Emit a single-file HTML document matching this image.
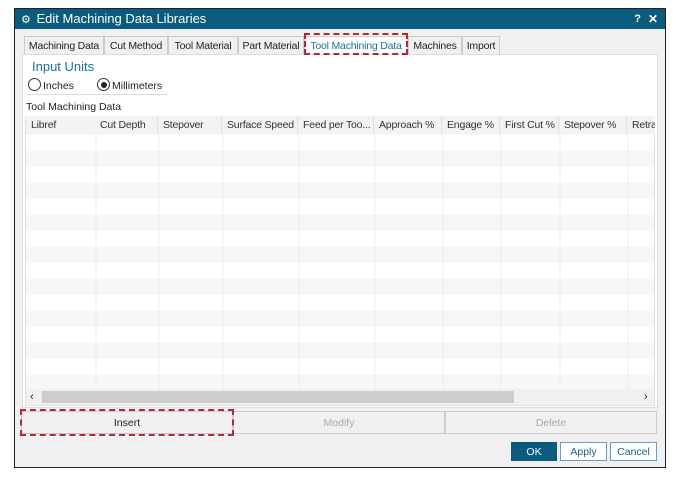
<!DOCTYPE html>
<html><head><style>
*{box-sizing:border-box;margin:0;padding:0}
body{width:680px;height:478px;background:#fff;font-family:"Liberation Sans",sans-serif;font-size:10.5px;color:#222;position:relative;overflow:hidden}
.a{position:absolute}
.dlg{left:14px;top:8px;width:652px;height:460px;border:1px solid #222;background:#f0f0f0}
.title{left:15px;top:9px;width:650px;height:20px;background:#0a5b7e;color:#fff;font-size:13px;line-height:20px}
.tab{top:36px;height:19px;border:1px solid #ccc;border-bottom:none;background:#f0f0f0;line-height:19px;text-align:center;font-size:10.5px;letter-spacing:-0.2px;white-space:nowrap}
.panel{left:22px;top:54px;width:636px;height:354px;background:#fff;border:1px solid #ddd}
.th{top:116px;height:18px;line-height:19px;padding-left:5px;border-right:1px solid #e0e0e0;background:#f3f3f3;color:#333;white-space:nowrap;overflow:hidden;letter-spacing:-0.2px}
.btn{top:411px;height:23px;border:1px solid #ccc;background:#f0f0f0;text-align:center;line-height:23px}
.dash{border:2px dashed #b0283a}
</style></head><body>
<div class="a dlg"></div>
<div class="a title"><span style="margin-left:6px;font-size:11px">⚙</span> <span style="margin-left:2px">Edit Machining Data Libraries</span><span style="position:absolute;right:24px;font-size:11px;font-weight:bold">?</span><span style="position:absolute;right:7px;font-size:12px;font-weight:bold">✕</span></div>
<div class="a tab" style="left:24px;width:80px">Machining Data</div>
<div class="a tab" style="left:104px;width:64px">Cut Method</div>
<div class="a tab" style="left:168px;width:70px">Tool Material</div>
<div class="a tab" style="left:238px;width:66px">Part Material</div>
<div class="a tab" style="left:304px;width:104px;background:#fff;color:#1a6f9a;border-color:#ccc">Tool Machining Data</div>
<div class="a tab" style="left:408px;width:54px">Machines</div>
<div class="a tab" style="left:462px;width:38px">Import</div>
<div class="a panel"></div>
<div class="a dash" style="left:304px;top:33px;width:104px;height:22px"></div>
<div class="a" style="left:32px;top:59px;font-size:13px;color:#1a6f9a">Input Units</div>
<div class="a" style="left:28px;top:78px;width:13px;height:13px;border:1px solid #333;border-radius:50%"></div>
<div class="a" style="left:43px;top:80px">Inches</div>
<div class="a" style="left:97px;top:78px;width:13px;height:13px;border:1px solid #333;border-radius:50%"><div style="margin:2.5px;width:6px;height:6px;background:#222;border-radius:50%"></div></div>
<div class="a" style="left:112px;top:80px">Millimeters</div>
<div class="a" style="left:26px;top:94px;width:142px;height:1px;background:#ddd"></div>
<div class="a" style="left:26px;top:101px">Tool Machining Data</div>
<div class="a" style="left:25px;top:116px;width:630px;height:290px;border:1px solid #e0e0e0;background:repeating-linear-gradient(#fff 0 16px,#f7f7f7 16px 32px);background-position:0 18px;overflow:hidden">
<svg class="a" style="left:0;top:0" width="630" height="290"><g stroke="#ececec">
<line x1="70" y1="0" x2="70" y2="272"/><line x1="133" y1="0" x2="133" y2="272"/><line x1="197" y1="0" x2="197" y2="272"/><line x1="273" y1="0" x2="273" y2="272"/><line x1="349" y1="0" x2="349" y2="272"/><line x1="417" y1="0" x2="417" y2="272"/><line x1="475" y1="0" x2="475" y2="272"/><line x1="534" y1="0" x2="534" y2="272"/><line x1="602" y1="0" x2="602" y2="272"/></g></svg>
</div>
<div class="a th" style="left:26px;width:70px">Libref</div>
<div class="a th" style="left:95px;width:63px">Cut Depth</div>
<div class="a th" style="left:158px;width:64px">Stepover</div>
<div class="a th" style="left:222px;width:76px">Surface Speed</div>
<div class="a th" style="left:298px;width:76px">Feed per Too...</div>
<div class="a th" style="left:374px;width:68px">Approach %</div>
<div class="a th" style="left:442px;width:58px">Engage %</div>
<div class="a th" style="left:500px;width:59px">First Cut %</div>
<div class="a th" style="left:559px;width:68px">Stepover %</div>
<div class="a th" style="left:627px;width:28px;border-right:none">Retra</div>
<div class="a" style="left:26px;top:389px;width:628px;height:16px;background:#f0f0f0"></div>
<div class="a" style="left:42px;top:391px;width:472px;height:12px;background:#cdcdcd"></div>
<div class="a" style="left:30px;top:391px;font-size:11px">‹</div>
<div class="a" style="left:644px;top:391px;font-size:11px">›</div>
<div class="a btn" style="left:21px;width:212px">Insert</div>
<div class="a btn" style="left:233px;width:212px;color:#aaa">Modify</div>
<div class="a btn" style="left:445px;width:212px;color:#aaa">Delete</div>
<div class="a dash" style="left:20px;top:409px;width:214px;height:27px"></div>
<div class="a" style="left:511px;top:442px;width:46px;height:19px;background:#0a5b7e;color:#fff;text-align:center;line-height:20px">OK</div>
<div class="a" style="left:560px;top:442px;width:47px;height:19px;border:1px solid #6a9fbf;background:#fff;color:#1a5f88;text-align:center;line-height:18px">Apply</div>
<div class="a" style="left:610px;top:442px;width:47px;height:19px;border:1px solid #6a9fbf;background:#fff;color:#1a5f88;text-align:center;line-height:18px">Cancel</div>
</body></html>
